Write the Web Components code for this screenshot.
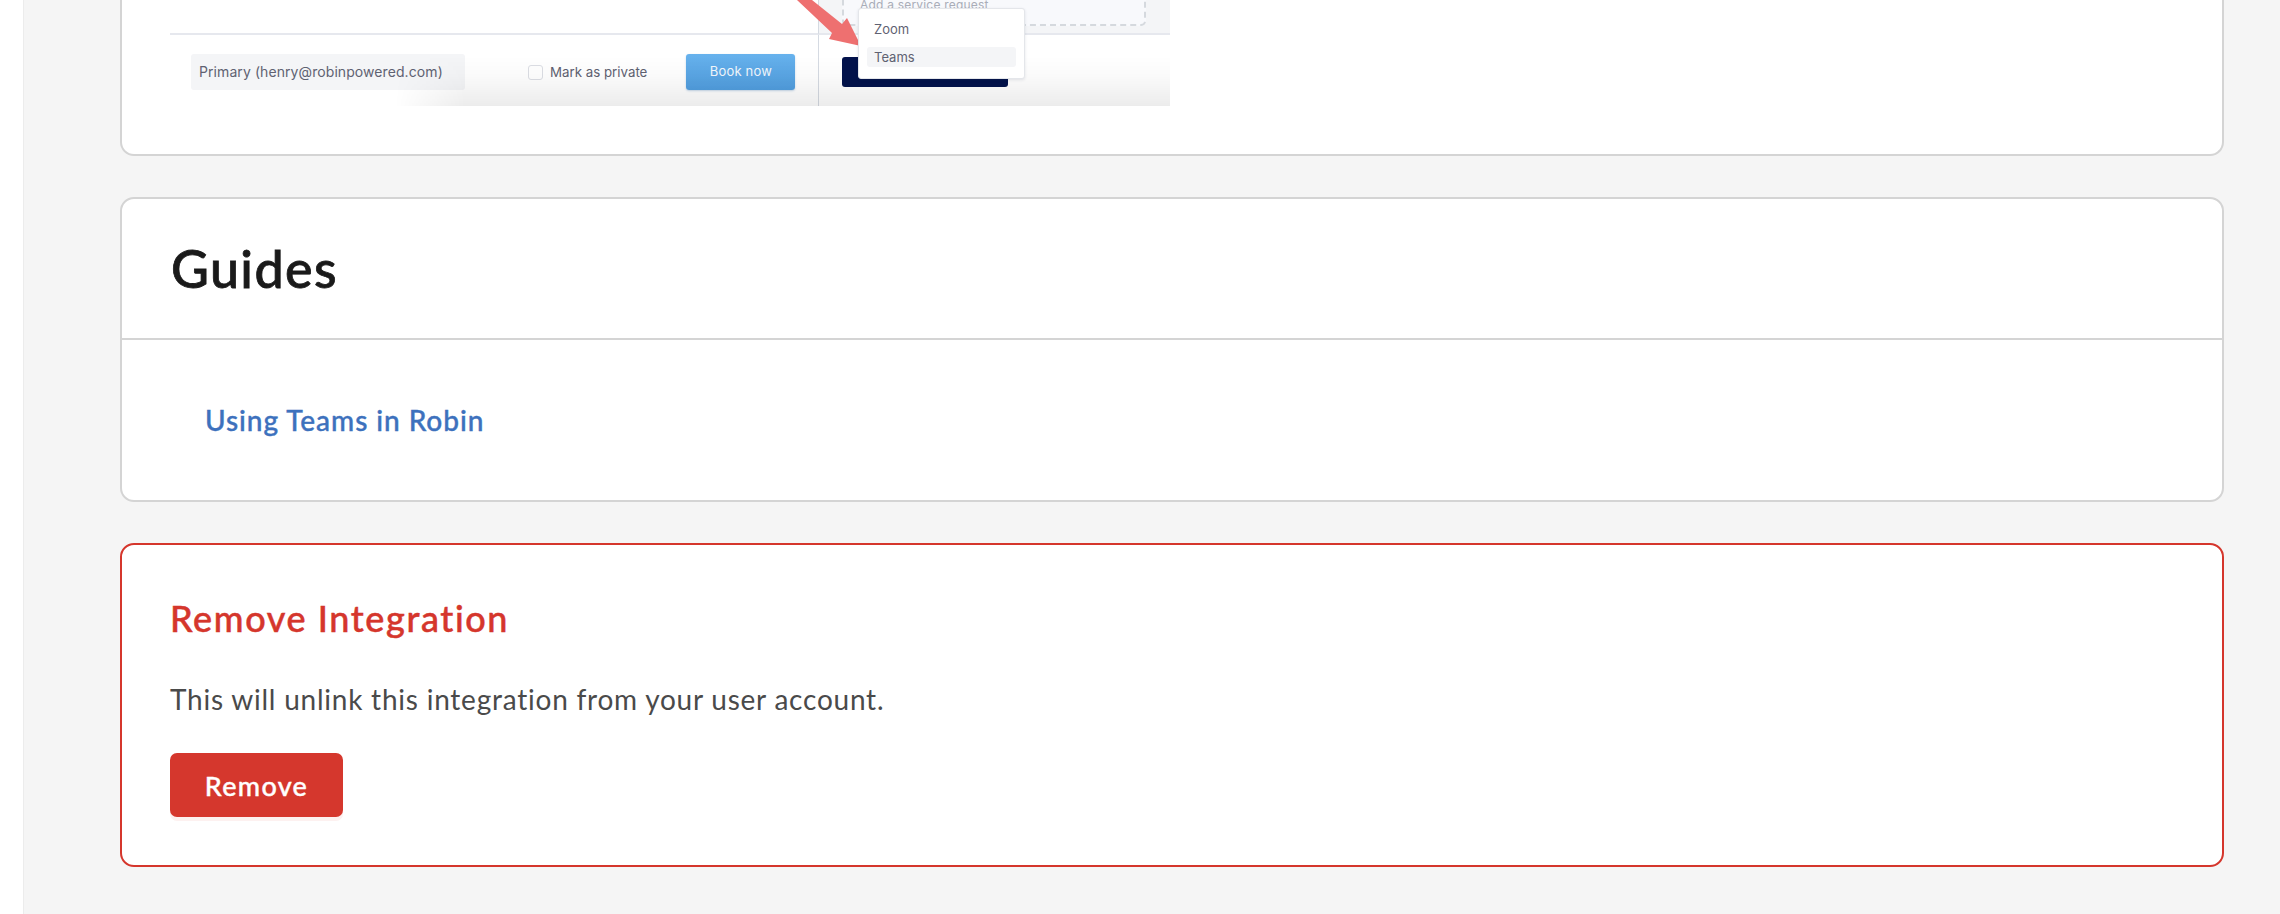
<!doctype html>
<html>
<head>
<meta charset="utf-8">
<title>Teams integration</title>
<style>
  html, body { margin: 0; height: 100%; background: #fff; overflow: hidden; }
  body { font-family: Lato, "Liberation Sans", sans-serif; }
</style>
</head>
<body>
<integration-page>
  <info-card flush>
    <product-shot></product-shot>
  </info-card>
  <info-card>
    <span slot="title">Guides</span>
    <guide-link>Using Teams in Robin</guide-link>
  </info-card>
  <danger-card title="Remove Integration" action="Remove">
    This will unlink this integration from your user account.
  </danger-card>
</integration-page>

<script>
  class IntegrationPage extends HTMLElement {
    constructor() {
      super()
      this.attachShadow({mode: 'open'}).innerHTML = `
        <style>
          :host { display: flex; height: 914px; overflow: hidden; }
          .rail { width: 23px; flex: none; background: #fff; }
          main {
            flex: 1;
            background: #f5f5f5;
            border-left: 1px solid #ececec;
            padding: 0 56px 0 96px;
            display: flex;
            flex-direction: column;
            gap: 41px;
          }
        </style>
        <div class="rail"></div>
        <main><slot></slot></main>
      `
    }
  }

  class InfoCard extends HTMLElement {
    constructor() {
      super()
      this.attachShadow({mode: 'open'}).innerHTML = `
        <style>
          :host {
            display: block;
            background: #fff;
            border: 2px solid #d4d4d4;
            border-radius: 14px;
          }
          :host([flush]) {
            height: 156px;
            box-sizing: border-box;
            border-top: 0;
            border-radius: 0 0 14px 14px;
            padding-left: 48px;
          }
          header {
            height: 141px;
            box-sizing: border-box;
            padding: 0 49px 2px;
            display: flex;
            align-items: center;
            border-bottom: 2px solid #d4d4d4;
            font-size: 52px;
            font-weight: 500;
            letter-spacing: 1.4px;
            -webkit-text-stroke: .8px #1a1a1a;
            color: #1a1a1a;
          }
          :host([flush]) header { display: none; }
        </style>
        <header><slot name="title"></slot></header>
        <slot></slot>
      `
    }
  }

  class GuideLink extends HTMLElement {
    constructor() {
      super()
      this.attachShadow({mode: 'open'}).innerHTML = `
        <style>
          :host {
            display: flex;
            align-items: center;
            height: 160px;
            padding-left: 83px;
          }
          a {
            color: #3d71bd;
            font-size: 28px;
            font-weight: 500;
            letter-spacing: .95px;
            -webkit-text-stroke: .4px #3d71bd;
            text-decoration: none;
          }
        </style>
        <a href="#"><slot></slot></a>
      `
    }
  }

  class DangerCard extends HTMLElement {
    constructor() {
      super()
      const title = this.getAttribute('title')
      const action = this.getAttribute('action')
      this.attachShadow({mode: 'open'}).innerHTML = `
        <style>
          :host {
            display: block;
            background: #fff;
            border: 2px solid #d5362c;
            border-radius: 14px;
            padding: 0 48px;
            height: 324px;
            box-sizing: border-box;
          }
          h2 {
            margin: 0;
            padding-top: 51px;
            font-size: 36px;
            line-height: 44px;
            font-weight: 500;
            letter-spacing: 1.6px;
            -webkit-text-stroke: .5px #d5362c;
            color: #d5362c;
          }
          p {
            margin: 0;
            padding-top: 42px;
            font-size: 28px;
            line-height: 34px;
            letter-spacing: .77px;
            color: #4a4a4a;
          }
          button {
            display: block;
            margin-top: 37px;
            width: 173px;
            height: 64px;
            border: 0;
            border-radius: 7px;
            background: #d5372d;
            box-shadow: 0 4px 0 #fdf1f0;
            color: #fff;
            font: 500 27px Lato, "Liberation Sans", sans-serif;
            letter-spacing: 1.3px;
            -webkit-text-stroke: .4px #fff;
          }
        </style>
        <h2>${title}</h2>
        <p><slot></slot></p>
        <button>${action}</button>
      `
    }
  }

  class ProductShot extends HTMLElement {
    constructor() {
      super()
      this.attachShadow({mode: 'open'}).innerHTML = `
        <style>
          :host {
            display: block;
            position: relative;
            width: 1000px;
            height: 106px;
            overflow: hidden;
            font-family: Inter, "Liberation Sans", sans-serif;
            color: #5f6272;
          }
          .top { display: flex; height: 35px; }
          .top .left { width: 648px; border-bottom: 2px solid #e6e8ee; box-sizing: border-box; }
          .top .right {
            flex: 1;
            background: #f4f5f7;
            border-left: 1px solid #d5dae2;
            border-bottom: 2px solid #e6e8ee;
            box-sizing: border-box;
          }
          .dashed {
            width: 304px;
            height: 30px;
            margin: -4px 0 0 23px;
            box-sizing: border-box;
            background: #f8f9fc;
            border: 2px dashed #d5d9de;
            border-radius: 5px;
            padding-left: 16px;
            font-size: 12px;
            line-height: 14px;
            color: #a9adb8;
            letter-spacing: .2px;
          }
          .bottom { display: flex; height: 71px; }
          .bottom .left {
            width: 648px;
            padding: 19px 0 0 21px;
            box-sizing: border-box;
            display: flex;
            align-items: flex-start;
          }
          .bottom .right {
            flex: 1;
            border-left: 1px solid #d5dae2;
            padding: 22px 0 0 23px;
          }
          .field {
            width: 274px;
            height: 36px;
            box-sizing: border-box;
            padding-left: 8px;
            background: #f4f5f7;
            border-radius: 3px;
            font-size: 14px;
            letter-spacing: .08px;
            line-height: 36px;
          }
          .check {
            display: flex;
            align-items: center;
            gap: 7px;
            height: 36px;
            margin-left: 63px;
            font-size: 13.3px;
          }
          .check i {
            width: 15px;
            height: 15px;
            box-sizing: border-box;
            border: 1px solid #dcdee4;
            border-radius: 3px;
            background: #fff;
          }
          .book {
            width: 109px;
            height: 36px;
            margin-left: 39px;
            border-radius: 3px;
            background: linear-gradient(#67b2ed, #519edf);
            box-shadow: 0 1px 2px rgba(60, 120, 180, .3);
            color: #f2f8fd;
            font-size: 13px;
            line-height: 35px;
            text-align: center;
            letter-spacing: .2px;
          }
          .navy { width: 166px; height: 30px; background: #03134c; border-radius: 3px; }
          .fade {
            position: absolute;
            left: 225px;
            right: 0;
            top: 56px;
            bottom: 0;
            background: linear-gradient(rgba(0,0,0,0), rgba(0,0,0,.02) 40%, rgba(0,0,0,.075));
            -webkit-mask-image: linear-gradient(to right, transparent, #000 70px);
            mask-image: linear-gradient(to right, transparent, #000 70px);
          }
          svg { position: absolute; left: 600px; top: 0; }
          .menu {
            position: absolute;
            left: 688px;
            top: 8px;
            width: 167px;
            height: 71px;
            box-sizing: border-box;
            padding: 10px 8px;
            background: #fff;
            border: 1px solid #e4e6ea;
            border-radius: 3px;
            box-shadow: 0 1px 3px rgba(40, 50, 80, .12);
            font-size: 13px;
          }
          .menu div { height: 20px; line-height: 20px; padding-left: 7px; border-radius: 3px; }
          .menu .sel { margin-top: 8px; background: #f4f5f7; }
        </style>
        <div class="top">
          <div class="left"></div>
          <div class="right"><div class="dashed">Add a service request</div></div>
        </div>
        <div class="bottom">
          <div class="left">
            <div class="field">Primary (henry@robinpowered.com)</div>
            <div class="check"><i></i>Mark as private</div>
            <div class="book">Book now</div>
          </div>
          <div class="right"><div class="navy"></div></div>
        </div>
        <div class="fade"></div>
        <svg width="120" height="60" viewBox="0 0 120 60">
          <path d="M27 0 L42 0 L72 24 L77 18 L91 46 L59 39 L62 33 Z" fill="#ee7070"/>
        </svg>
        <div class="menu">
          <div>Zoom</div>
          <div class="sel">Teams</div>
        </div>
      `
    }
  }

  customElements.define('integration-page', IntegrationPage)
  customElements.define('info-card', InfoCard)
  customElements.define('guide-link', GuideLink)
  customElements.define('danger-card', DangerCard)
  customElements.define('product-shot', ProductShot)
</script>
</body>
</html>
